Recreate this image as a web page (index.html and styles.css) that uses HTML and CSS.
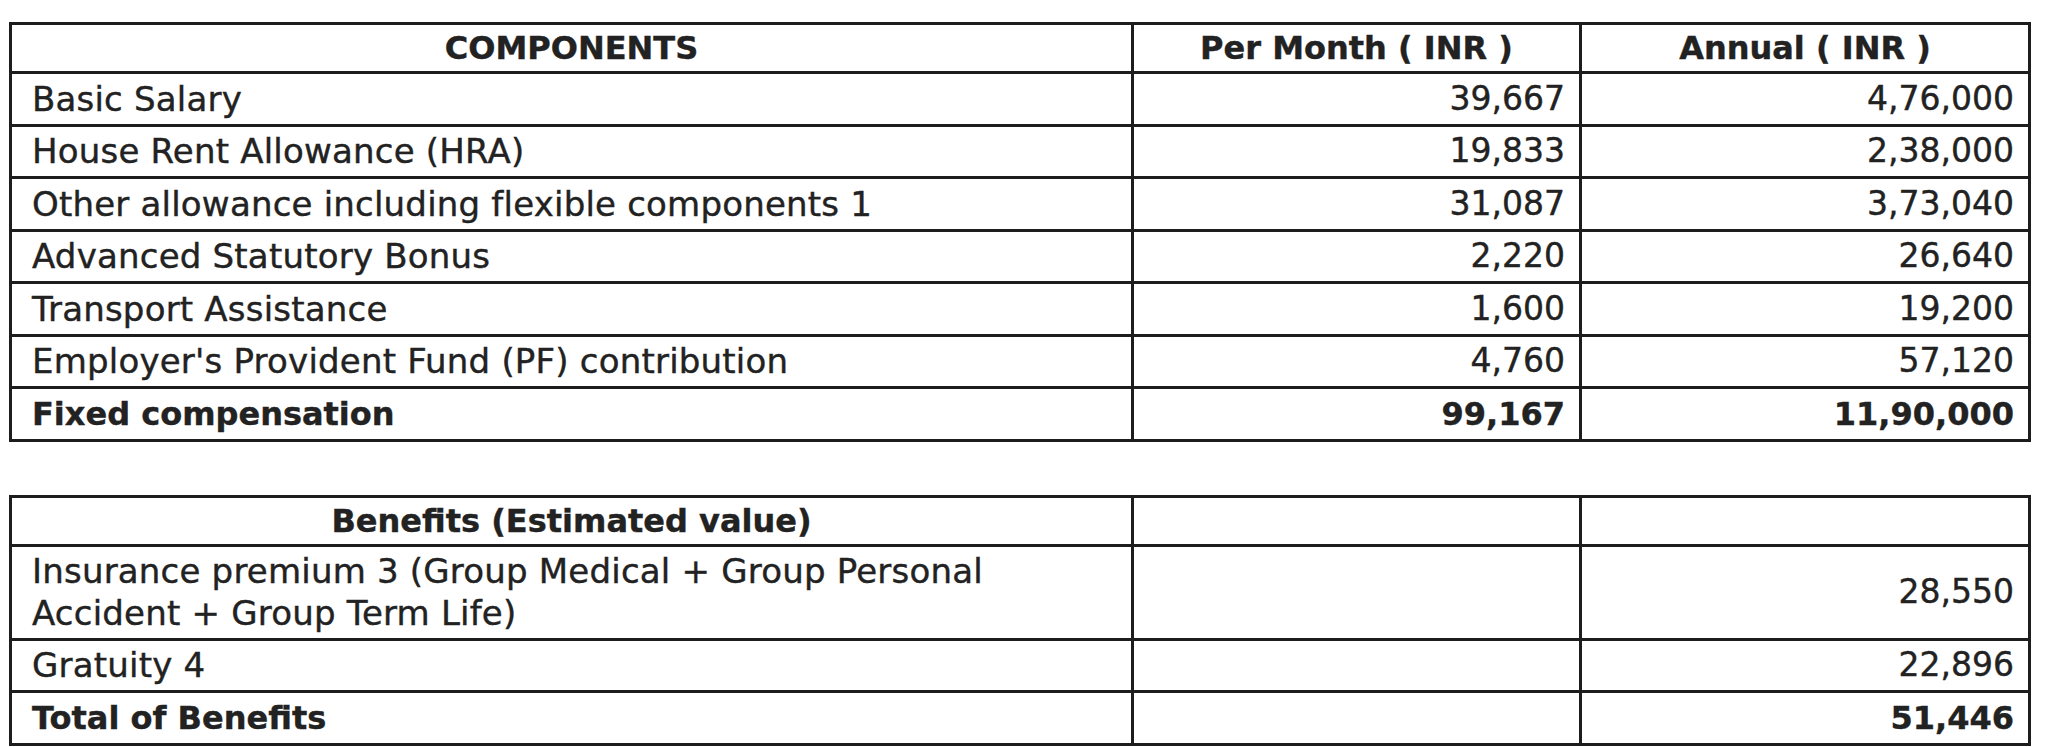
FILE: index.html
```html
<!DOCTYPE html>
<html>
<head>
<meta charset="utf-8">
<link rel="stylesheet" href="styles.css">
</head>
<body>
<div class="page">
  <table class="sheet">
    <colgroup><col class="c1"><col class="c2"><col class="c3"></colgroup>
    <tr class="head"><th>COMPONENTS</th><th>Per Month ( INR )</th><th>Annual ( INR )</th></tr>
    <tr><td>Basic Salary</td><td class="num">39,667</td><td class="num">4,76,000</td></tr>
    <tr><td>House Rent Allowance (HRA)</td><td class="num">19,833</td><td class="num">2,38,000</td></tr>
    <tr><td>Other allowance including flexible components 1</td><td class="num">31,087</td><td class="num">3,73,040</td></tr>
    <tr><td>Advanced Statutory Bonus</td><td class="num">2,220</td><td class="num">26,640</td></tr>
    <tr><td>Transport Assistance</td><td class="num">1,600</td><td class="num">19,200</td></tr>
    <tr><td>Employer's Provident Fund (PF) contribution</td><td class="num">4,760</td><td class="num">57,120</td></tr>
    <tr class="total"><td>Fixed compensation</td><td class="num">99,167</td><td class="num">11,90,000</td></tr>
  </table>

  <table class="sheet second">
    <colgroup><col class="c1"><col class="c2"><col class="c3"></colgroup>
    <tr class="head"><th>Benefits (Estimated value)</th><th></th><th></th></tr>
    <tr class="tall"><td>Insurance premium 3 (Group Medical + Group Personal<br>Accident + Group Term Life)</td><td class="num"></td><td class="num">28,550</td></tr>
    <tr><td>Gratuity 4</td><td class="num"></td><td class="num">22,896</td></tr>
    <tr class="total"><td>Total of Benefits</td><td class="num"></td><td class="num">51,446</td></tr>
  </table>
</div>
</body>
</html>
```

FILE: styles.css
```css
html, body {
  margin: 0;
  padding: 0;
  background: #ffffff;
}

.page {
  padding: 22px 0 0 9px;
}

.sheet {
  border-collapse: collapse;
  table-layout: fixed;
  width: 2019px;
  font-family: "DejaVu Sans", sans-serif;
  font-size: 34px;
  color: #222222;
  -webkit-text-stroke: 0.4px #222222;
}

.sheet.second {
  margin-top: 53px;
}

.c1 { width: 1122px; }
.c2 { width: 448px; }
.c3 { width: 449px; }

.sheet th,
.sheet td {
  border: 3px solid #1d1d1d;
  padding: 0 14px 0 20px;
  height: 49.5px;
  line-height: 42px;
  white-space: nowrap;
  overflow: hidden;
  vertical-align: middle;
}

.sheet td:first-child {
  letter-spacing: 0.2px;
}

.sheet td.num {
  text-align: right;
  font-size: 33px;
}

.sheet tr.head th {
  height: 46px;
  font-weight: bold;
  font-size: 32px;
  letter-spacing: 0;
  text-align: center;
  padding: 0 10px;
}

.sheet tr.total td {
  font-weight: bold;
  font-size: 32px;
  letter-spacing: 0;
}

.sheet tr.tall td {
  height: 91px;
}
```
